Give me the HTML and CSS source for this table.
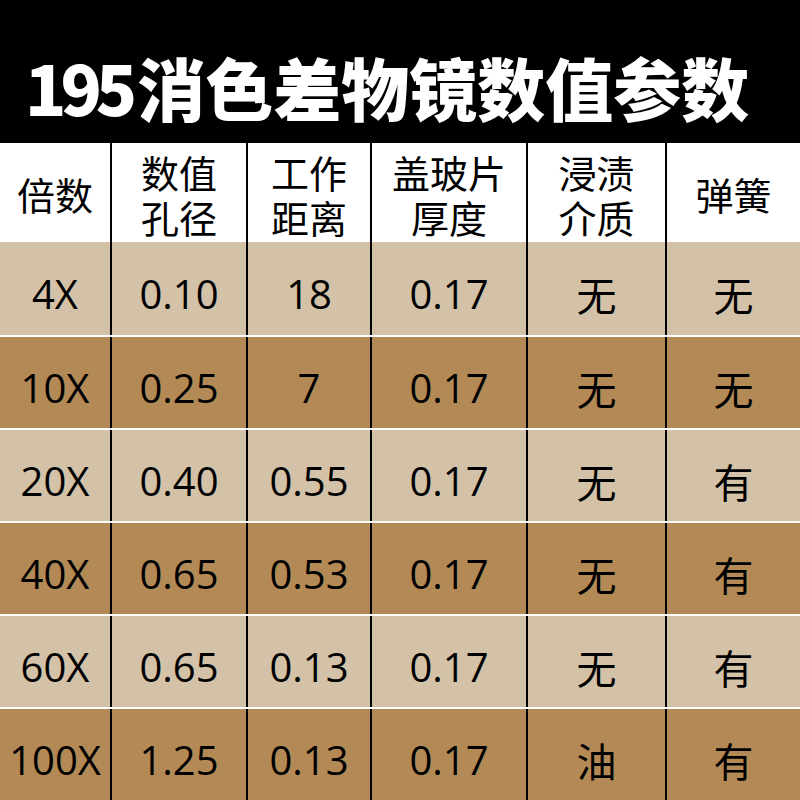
FILE: index.html
```html
<!DOCTYPE html>
<html lang="zh-CN">
<head>
<meta charset="utf-8">
<title>195消色差物镜数值参数</title>
<link rel="stylesheet" href="styles.css">
</head>
<body>
<div class="page">
  <header class="banner">
    <h1 class="title"><span class="num">195</span>消色差物镜数值参数</h1>
  </header>
  <div class="table">
    <div class="row head">
      <div class="cell">倍数</div>
      <div class="cell">数值<br>孔径</div>
      <div class="cell">工作<br>距离</div>
      <div class="cell">盖玻片<br>厚度</div>
      <div class="cell">浸渍<br>介质</div>
      <div class="cell">弹簧</div>
    </div>
    <div class="row light first">
      <div class="cell">4X</div><div class="cell">0.10</div><div class="cell">18</div><div class="cell">0.17</div><div class="cell">无</div><div class="cell">无</div>
    </div>
    <div class="row dark">
      <div class="cell">10X</div><div class="cell">0.25</div><div class="cell">7</div><div class="cell">0.17</div><div class="cell">无</div><div class="cell">无</div>
    </div>
    <div class="row light">
      <div class="cell">20X</div><div class="cell">0.40</div><div class="cell">0.55</div><div class="cell">0.17</div><div class="cell">无</div><div class="cell">有</div>
    </div>
    <div class="row dark">
      <div class="cell">40X</div><div class="cell">0.65</div><div class="cell">0.53</div><div class="cell">0.17</div><div class="cell">无</div><div class="cell">有</div>
    </div>
    <div class="row light">
      <div class="cell">60X</div><div class="cell">0.65</div><div class="cell">0.13</div><div class="cell">0.17</div><div class="cell">无</div><div class="cell">有</div>
    </div>
    <div class="row dark">
      <div class="cell">100X</div><div class="cell">1.25</div><div class="cell">0.13</div><div class="cell">0.17</div><div class="cell">油</div><div class="cell">有</div>
    </div>
  </div>
</div>
</body>
</html>
```

FILE: styles.css
```css
* { box-sizing: border-box; }
html, body {
  margin: 0;
  padding: 0;
  background: #ffffff;
}
.page {
  width: 800px;
  height: 800px;
  overflow: hidden;
  background: #ffffff;
}
.banner {
  height: 143px;
  background: #000000;
  display: flex;
  align-items: flex-start;
  padding: 47px 0 0 25px;
}
.title {
  margin: 0;
  color: #ffffff;
  font-family: "Noto Sans CJK SC", sans-serif;
  font-weight: 900;
  font-size: 68px;
  line-height: 80px;
  white-space: nowrap;
}
.title .num {
  letter-spacing: -6px;
  margin-right: 6px;
}
.table {
  display: flex;
  flex-direction: column;
  gap: 2px;
  background: #ffffff;
}
.row {
  display: grid;
  grid-template-columns: 110px 134px 122px 154px 137px 133px;
  column-gap: 2px;
  background: #000000;
  height: 91px;
}
.row.head {
  height: 99px;
  margin-bottom: -2px;
}
.row.first { height: 93px; }
.cell {
  display: flex;
  align-items: center;
  justify-content: center;
  text-align: center;
  color: #000000;
}
.head .cell {
  background: #ffffff;
  font-family: "Noto Sans CJK SC", sans-serif;
  font-size: 38px;
  line-height: 45px;
  padding-top: 2px;
}
.light .cell, .dark .cell {
  font-family: "Open Sans", "Noto Sans CJK SC", sans-serif;
  font-size: 40px;
  padding-top: 10px;
}
.light .cell { background: #d3c2a7; }
.dark .cell { background: #b38a56; }
```
